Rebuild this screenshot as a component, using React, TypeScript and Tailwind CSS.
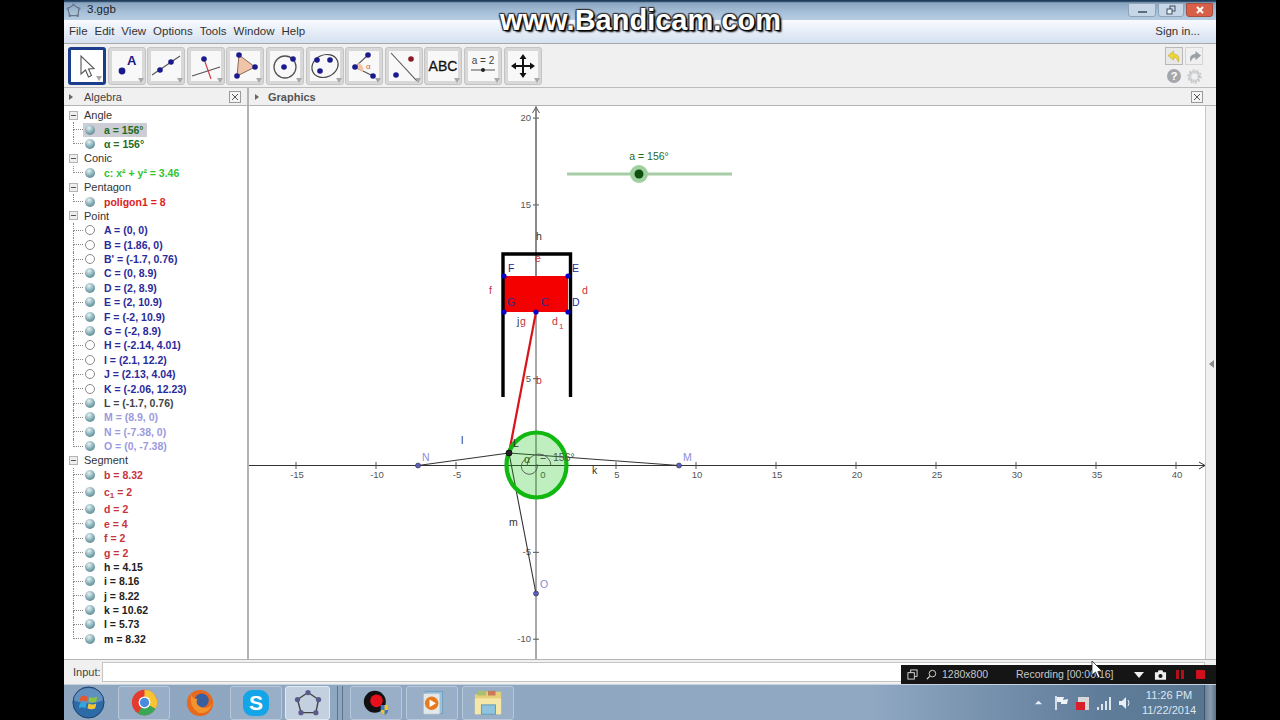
const BLUE = 'text-[#2a2a9a]';
const LILAC = 'text-[#9a9ade]';
const RED = 'text-[#c8323c]';
const INK = 'text-[#222222]';

type Row = { label: React.ReactNode; color: string; hollow?: boolean; selected?: boolean; tall?: boolean };
type Group = { name: string; rows: Row[] };

const groups: Group[] = [
  {
    name: 'Angle',
    rows: [
      { label: 'a = 156°', color: 'text-[#1f6b1f]', selected: true },
      { label: 'α = 156°', color: 'text-[#1f6b1f]' },
    ],
  },
  { name: 'Conic', rows: [{ label: 'c: x² + y² = 3.46', color: 'text-[#2fc42f]' }] },
  { name: 'Pentagon', rows: [{ label: 'poligon1 = 8', color: 'text-[#e01c1c]' }] },
  {
    name: 'Point',
    rows: [
      { label: 'A = (0, 0)', color: BLUE, hollow: true },
      { label: 'B = (1.86, 0)', color: BLUE, hollow: true },
      { label: "B' = (-1.7, 0.76)", color: BLUE, hollow: true },
      { label: 'C = (0, 8.9)', color: BLUE },
      { label: 'D = (2, 8.9)', color: BLUE },
      { label: 'E = (2, 10.9)', color: BLUE },
      { label: 'F = (-2, 10.9)', color: BLUE },
      { label: 'G = (-2, 8.9)', color: BLUE },
      { label: 'H = (-2.14, 4.01)', color: BLUE, hollow: true },
      { label: 'I = (2.1, 12.2)', color: BLUE, hollow: true },
      { label: 'J = (2.13, 4.04)', color: BLUE, hollow: true },
      { label: 'K = (-2.06, 12.23)', color: BLUE, hollow: true },
      { label: 'L = (-1.7, 0.76)', color: 'text-[#444444]' },
      { label: 'M = (8.9, 0)', color: LILAC },
      { label: 'N = (-7.38, 0)', color: LILAC },
      { label: 'O = (0, -7.38)', color: LILAC },
    ],
  },
  {
    name: 'Segment',
    rows: [
      { label: 'b = 8.32', color: RED },
      {
        label: (
          <>
            c<sub className="text-[8px]">1</sub> = 2
          </>
        ),
        color: RED,
        tall: true,
      },
      { label: 'd = 2', color: RED },
      { label: 'e = 4', color: RED },
      { label: 'f = 2', color: RED },
      { label: 'g = 2', color: RED },
      { label: 'h = 4.15', color: INK },
      { label: 'i = 8.16', color: INK },
      { label: 'j = 8.22', color: INK },
      { label: 'k = 10.62', color: INK },
      { label: 'l = 5.73', color: INK },
      { label: 'm = 8.32', color: INK },
    ],
  },
];

function Marble({ hollow }: { hollow?: boolean }) {
  if (hollow) {
    return <div className="w-[10px] h-[10px] rounded-full border border-[#8a8a8a] bg-white shrink-0" />;
  }
  return (
    <div className="w-[10px] h-[10px] rounded-full shrink-0 bg-[radial-gradient(circle_at_40%_30%,#e8f2f4_0%,#8fb4bc_45%,#3f6f7c_100%)]" />
  );
}

function AlgebraRow({ row, last }: { row: Row; last: boolean }) {
  return (
    <div className={`flex items-center ${row.tall ? 'h-[20px]' : 'h-[14.4px]'}`}>
      <div className="w-[10px] self-stretch flex flex-col shrink-0">
        <div className="flex-1 border-l border-b border-dotted border-[#888888]" />
        <div className={`flex-1 ${last ? '' : 'border-l border-dotted border-[#888888]'}`} />
      </div>
      <div className={`flex items-center h-[14px] pl-[2px] pr-[3px] ${row.selected ? 'bg-[#cdcdd6]' : ''}`}>
        <Marble hollow={row.hollow} />
        <div className={`ml-[9px] leading-[14px] text-[10.5px] font-bold whitespace-nowrap ${row.color}`}>{row.label}</div>
      </div>
    </div>
  );
}

function Algebra() {
  return (
    <div className="w-[183px] shrink-0 bg-white pt-[2px] pl-[5px] overflow-hidden">
      {groups.map((g) => (
        <div key={g.name}>
          <div className="flex items-center h-[14.4px]">
            <div className="w-[9px] h-[9px] border border-[#b4b4b4] bg-[#eeeeee] flex items-center justify-center shrink-0">
              <div className="w-[5px] h-px bg-[#555555]" />
            </div>
            <span className="ml-[6px] text-[11px] text-[#333333]">{g.name}</span>
          </div>
          <div className="ml-[4px]">
            {g.rows.map((r, i) => (
              <AlgebraRow key={i} row={r} last={i === g.rows.length - 1} />
            ))}
          </div>
        </div>
      ))}
    </div>
  );
}

function Dot({ x, y, fill = '#1a1a8c', r = 2.8 }: { x: number; y: number; fill?: string; r?: number }) {
  return <circle cx={x} cy={y} r={r} fill={fill} />;
}

const toolIcons: React.ReactNode[] = [
  <path d="M13 9 L13 27 L17.5 23 L20.5 30 L23.5 28.5 L20.5 22 L26 21.5 Z" fill="#fff" stroke="#555" strokeWidth="1.1" />,
  <>
    <Dot x={14} y={24} r={3.4} />
    <text x="19" y="18" fontSize="13" fontWeight="700" fill="#1a1a8c" fontFamily="Liberation Sans">A</text>
  </>,
  <>
    <path d="M5 28 L33 9" stroke="#555" strokeWidth="1.1" />
    <Dot x={13} y={23} />
    <Dot x={24} y={15} />
  </>,
  <>
    <path d="M5 29 L33 20" stroke="#555" strokeWidth="1.1" />
    <path d="M17 12 L24 32" stroke="#c8323c" strokeWidth="1.1" />
    <Dot x={17} y={12} />
  </>,
  <>
    <path d="M13 8 L29 20 L11 29 Z" fill="#efc4a8" stroke="#8a6a58" strokeWidth="1" />
    <Dot x={13} y={8} />
    <Dot x={29} y={20} />
    <Dot x={11} y={29} />
  </>,
  <>
    <circle cx="19" cy="20" r="11" fill="none" stroke="#555" strokeWidth="1.3" />
    <Dot x={18} y={20} />
    <Dot x={27} y={12} />
  </>,
  <>
    <ellipse cx="19" cy="19" rx="13.5" ry="11" transform="rotate(-25 19 19)" fill="none" stroke="#444" strokeWidth="1.2" />
    <Dot x={11} y={13} />
    <Dot x={24} y={13} />
    <Dot x={14} y={24} />
  </>,
  <>
    <path d="M23 8 L10 20 L28 29" fill="none" stroke="#555" strokeWidth="1.1" />
    <path d="M14 16 A8 8 0 0 1 18 25 L10 20 Z" fill="#efc4a8" />
    <text x="21" y="22" fontSize="8" fill="#c8662c" fontFamily="Liberation Sans">α</text>
    <Dot x={23} y={8} />
    <Dot x={10} y={20} />
    <Dot x={28} y={29} />
  </>,
  <>
    <path d="M6 6 L32 34" stroke="#555" strokeWidth="1.1" />
    <Dot x={26} y={12} fill="#8c1a24" />
    <Dot x={11} y={28} />
  </>,
  <text x="19" y="24" textAnchor="middle" fontSize="14" fill="#111" stroke="#111" strokeWidth="0.3" fontFamily="Liberation Sans">ABC</text>,
  <>
    <text x="19" y="17" textAnchor="middle" fontSize="10" fill="#444" fontFamily="Liberation Sans">a = 2</text>
    <path d="M7 23 L31 23" stroke="#555" strokeWidth="1" />
    <circle cx="19" cy="23" r="2" fill="#222" />
  </>,
  <path
    d="M19 7 L22.5 12 L20 12 L20 18 L26 18 L26 15.5 L31 19 L26 22.5 L26 20 L20 20 L20 26 L22.5 26 L19 31 L15.5 26 L18 26 L18 20 L12 20 L12 22.5 L7 19 L12 15.5 L12 18 L18 18 L18 12 L15.5 12 Z"
    fill="#111"
  />,
];

function ToolButton({ index }: { index: number }) {
  const selected = index === 0;
  return (
    <div
      className={`relative w-[38px] h-[38px] rounded-[3px] shrink-0 ${
        selected ? 'border-[3px] border-[#1c3c8c] bg-white' : 'border border-[#c4c4c4] bg-[#d8d8d8] p-[3px]'
      }`}
    >
      <svg viewBox={selected ? '3 3 32 32' : '4 4 30 30'} className={selected ? 'w-[32px] h-[32px]' : 'w-[30px] h-[30px] bg-[#f8f8f8]'}>
        {toolIcons[index]}
      </svg>
      <div className="absolute right-[1px] bottom-[1px] w-0 h-0 border-l-[3px] border-r-[3px] border-t-[5px] border-l-transparent border-r-transparent border-t-[#a8a8a8]" />
    </div>
  );
}

function CloseBox() {
  return (
    <div className="w-[12px] h-[12px] border border-[#9a9a9a] bg-[#f4f4f4] flex items-center justify-center">
      <svg viewBox="0 0 8 8" className="w-[8px] h-[8px]">
        <path d="M1 1 L7 7 M7 1 L1 7" stroke="#555" strokeWidth="1" />
      </svg>
    </div>
  );
}

function SmallPentagon({ className, dot = '#5a5a8c' }: { className: string; dot?: string }) {
  const pts = [
    [16, 4],
    [28, 12],
    [25, 27],
    [8, 27],
    [4, 12],
  ];
  return (
    <svg viewBox="0 0 32 32" className={className}>
      <polygon points={pts.map((p) => p.join(',')).join(' ')} fill="none" stroke="#444" strokeWidth="1.6" />
      {pts.map((p, i) => (
        <circle key={i} cx={p[0]} cy={p[1]} r="3" fill={dot} />
      ))}
    </svg>
  );
}

function Graphics() {
  const xTicks = [-15, -10, -5, 5, 10, 15, 20, 25, 30, 35, 40];
  const yTicks = [20, 15, 5, -5, -10];
  const px = (u: number) => 536 + u * 16;
  const py = (u: number) => 465.5 - u * 17.37;
  const label = { fontFamily: 'Liberation Sans', fontSize: 10.5 };
  return (
    <svg viewBox="249 106 956 553" className="w-[956px] h-[553px] bg-white block">
      <path d="M249 465.5 H1205 M1199 462 L1205 465.5 L1199 469" stroke="#333" strokeWidth="1" fill="none" />
      <path d="M536 659 V107 M532.5 113 L536 107 L539.5 113" stroke="#555" strokeWidth="1" fill="none" />
      {xTicks.map((t) => (
        <g key={t}>
          <path d={`M${px(t)} 462 V469`} stroke="#555" />
          <text x={px(t) + 1} y="478" textAnchor="middle" fill="#555" {...label} fontSize="9.5">{t}</text>
        </g>
      ))}
      {yTicks.map((t) => (
        <g key={t}>
          <path d={`M533 ${py(t)} H539`} stroke="#555" />
          <text x="531" y={py(t) + 3} textAnchor="end" fill="#555" {...label} fontSize="9.5">{t}</text>
        </g>
      ))}
      <text x="543" y="478" textAnchor="middle" fill="#555" {...label} fontSize="9.5">0</text>

      <path d="M567 174 H732" stroke="#a6cda6" strokeWidth="3" />
      <circle cx="639" cy="174" r="9" fill="#9fd09f" />
      <circle cx="639" cy="174" r="4.5" fill="#0f4f0f" />
      <text x="649" y="160" textAnchor="middle" fill="#1f6b1f" {...label}>a = 156°</text>

      <rect x="504" y="276" width="64" height="36" fill="#f50000" />
      <path d="M536 106 V276" stroke="#777" strokeWidth="1.2" />
      <path d="M503 397 V254 H570.5 V397" fill="none" stroke="#000" strokeWidth="3.4" />
      <path d="M536 312 L509 453" stroke="#d8141c" strokeWidth="2.2" />
      <path d="M418 465.5 L509 453 L679 465.5 M509 453 L536 593.5" fill="none" stroke="#333" strokeWidth="1.1" />

      <ellipse cx="536.5" cy="465" rx="30" ry="32.5" fill="#00c000" fillOpacity="0.25" stroke="#10b810" strokeWidth="4.2" />
      <path d="M527 466 A10 10 0 0 1 551 466" fill="none" stroke="#555" strokeWidth="0.9" />
      <path d="M526 459 A8 8 0 1 0 537 464" fill="none" stroke="#555" strokeWidth="0.9" />

      <Dot x={504} y={276} fill="#0000c8" r={2.6} />
      <Dot x={568} y={276} fill="#0000c8" r={2.6} />
      <Dot x={504} y={312} fill="#0000c8" r={2.6} />
      <Dot x={536} y={312} fill="#0000c8" r={2.6} />
      <Dot x={568} y={312} fill="#0000c8" r={2.6} />
      <circle cx="509" cy="453" r="3" fill="#222" stroke="#111" />
      <circle cx="418" cy="465.5" r="2.5" fill="#5c5cc0" stroke="#333" strokeWidth="0.6" />
      <circle cx="679" cy="465.5" r="2.5" fill="#5c5cc0" stroke="#333" strokeWidth="0.6" />
      <circle cx="536" cy="593.5" r="2.5" fill="#5c5cc0" stroke="#333" strokeWidth="0.6" />

      <g {...label}>
        <text x="536" y="240" fill="#333">h</text>
        <text x="535" y="262" fill="#c8323c">e</text>
        <text x="508" y="272" fill="#2a2a9a">F</text>
        <text x="572" y="272" fill="#2a2a9a">E</text>
        <text x="489" y="294" fill="#c8323c">f</text>
        <text x="582" y="294" fill="#c8323c">d</text>
        <text x="507" y="306" fill="#2a2a9a">G</text>
        <text x="541" y="306" fill="#2a2a9a">C</text>
        <text x="572" y="306" fill="#2a2a9a">D</text>
        <text x="517" y="325" fill="#333">j</text>
        <text x="520" y="325" fill="#c8323c">g</text>
        <text x="552" y="325" fill="#c8323c">d</text>
        <text x="559" y="329" fill="#c8323c" fontSize="8">1</text>
        <text x="536" y="384" fill="#c8323c">b</text>
        <text x="461" y="444" fill="#333">l</text>
        <text x="513" y="447" fill="#333">L</text>
        <text x="422" y="461" fill="#8c8cd8">N</text>
        <text x="683" y="461" fill="#8c8cd8">M</text>
        <text x="592" y="474" fill="#333">k</text>
        <text x="509" y="526" fill="#333">m</text>
        <text x="540" y="588" fill="#8c8cd8">O</text>
        <text x="524" y="463" fill="#1f6b1f">α</text>
        <text x="540" y="461" fill="#555">=</text>
        <text x="553" y="461" fill="#555">156°</text>
      </g>
    </svg>
  );
}

function TaskButton({ width, active, children }: { width: string; active?: boolean; children: React.ReactNode }) {
  return (
    <div
      className={`${width} h-[34px] rounded-[3px] flex items-center justify-center shrink-0 ${
        active ? 'bg-[#c3d0df] border border-[#e0e8f0]' : 'bg-[#9db2c9]/70 border border-[#b9c8d8]'
      }`}
    >
      {children}
    </div>
  );
}

function Taskbar() {
  return (
    <div className="h-[36px] flex items-center bg-[linear-gradient(90deg,#8ea6c0_0%,#90a8c2_70%,#5f7c9a_90%,#58758f_100%)] border-t border-[#c8d4e0]">
      <div className="w-[54px] flex justify-center pr-[6px] shrink-0">
        <svg viewBox="0 0 34 34" className="w-[33px] h-[33px]">
          <circle cx="17" cy="17" r="16" fill="#2d6aa8" stroke="#1b3e66" />
          <path d="M2 15 A15 13 0 0 1 32 15 Q17 21 2 15 Z" fill="#fff" fillOpacity="0.25" />
          <path d="M9 11 Q12 9 16 11 L15 16 Q12 14 8 16 Z" fill="#e9542a" />
          <path d="M18 11 Q21 13 26 11 L25 16 Q21 18 17 16 Z" fill="#8cc63f" />
          <path d="M8 18 Q12 16 15 18 L14 23 Q11 21 7 23 Z" fill="#2fa8e0" />
          <path d="M17 18 Q21 20 25 18 L24 23 Q20 25 16 23 Z" fill="#f7c531" />
        </svg>
      </div>
      <div className="flex items-center gap-[4px]">
        <TaskButton width="w-[52px]">
          <svg viewBox="0 0 32 32" className="w-[27px] h-[27px]">
            <circle cx="16" cy="16" r="15" fill="#e33b2e" />
            <path d="M16 16 L29 23.5 A15 15 0 0 1 8 29 Z" fill="#3aa757" />
            <path d="M16 16 L16 1 A15 15 0 0 1 29 23.5 Z" fill="#f7c531" />
            <circle cx="16" cy="16" r="7" fill="#fff" />
            <circle cx="16" cy="16" r="5.5" fill="#4a8be0" />
          </svg>
        </TaskButton>
        <div className="w-[52px] flex justify-center shrink-0">
          <svg viewBox="0 0 32 32" className="w-[28px] h-[28px]">
            <circle cx="16" cy="16" r="15" fill="#e8681e" />
            <circle cx="18" cy="13" r="8" fill="#3a5f9e" />
            <path d="M6 6 Q3 20 14 27 Q26 30 30 16 Q26 24 18 21 Q10 18 13 11 Q8 12 6 6 Z" fill="#f2932c" />
          </svg>
        </div>
        <TaskButton width="w-[52px]">
          <div className="w-[26px] h-[26px] rounded-[9px] bg-[#12a5e8] flex items-center justify-center text-white font-bold text-[21px] leading-none">
            S
          </div>
        </TaskButton>
        <TaskButton width="w-[45px] ml-[-1px]" active>
          <SmallPentagon className="w-[28px] h-[28px]" />
        </TaskButton>
        <div className="w-[6px] h-[34px] border-x border-[#5f7288] mx-[3px] shrink-0" />
        <TaskButton width="w-[52px]">
          <svg viewBox="0 0 32 32" className="w-[27px] h-[27px]">
            <circle cx="14" cy="15" r="13" fill="#111" />
            <circle cx="16" cy="14" r="7.5" fill="#e8101c" />
            <path d="M21 19 L30 19 L30 25 Q30 29 25.5 31 Q21 29 21 25 Z" fill="#3c78c8" />
            <path d="M25.5 19 H30 V25 H25.5 Z M21 25 H25.5 V31 Q21 29 21 25 Z" fill="#f2c431" />
          </svg>
        </TaskButton>
        <TaskButton width="w-[52px]">
          <svg viewBox="0 0 32 32" className="w-[27px] h-[27px]">
            <rect x="8" y="3" width="20" height="26" fill="#8ec4e8" stroke="#6a9cc0" />
            <rect x="5" y="5" width="20" height="25" rx="2" fill="#e2e8ea" stroke="#a8b4bc" />
            <circle cx="15" cy="17" r="8" fill="#e87a1e" />
            <path d="M12.5 12.5 L20 17 L12.5 21.5 Z" fill="#fff" />
          </svg>
        </TaskButton>
        <TaskButton width="w-[52px]">
          <svg viewBox="0 0 32 32" className="w-[30px] h-[30px]">
            <path d="M2 7 H12 L14 4 H30 V28 H2 Z" fill="#e6cf7a" />
            <rect x="5" y="3" width="9" height="5" fill="#a8c070" />
            <rect x="16" y="3" width="8" height="5" fill="#c87a5a" />
            <path d="M2 11 H30 V28 H2 Z" fill="#f4e7a8" />
            <rect x="9" y="18" width="15" height="10" fill="#8ec4e0" stroke="#5f98b8" />
          </svg>
        </TaskButton>
      </div>
      <div className="ml-auto flex items-center text-[#dbe6f0]">
        <svg viewBox="0 0 10 10" className="w-[9px] h-[9px] mr-[11px]">
          <path d="M5 3 L9 7 H1 Z" fill="#e8eef4" />
        </svg>
        <svg viewBox="0 0 16 16" className="w-[16px] h-[16px] mr-[5px]">
          <path d="M2 1 V15" stroke="#f0f4f8" strokeWidth="1.6" />
          <path d="M3 2 H10 L9 5 L14 4 L13 9 H7 L7 7 H3 Z" fill="#f0f4f8" />
        </svg>
        <svg viewBox="0 0 16 16" className="w-[16px] h-[16px] mr-[5px]">
          <rect x="3" y="2" width="11" height="13" fill="#d8d8d8" />
          <path d="M1 7 H10 V15 H1 Z" fill="#d8202c" />
        </svg>
        <svg viewBox="0 0 16 16" className="w-[16px] h-[16px] mr-[5px]">
          <path d="M1 12 H3 V15 H1 Z M5 9 H7 V15 H5 Z M9 6 H11 V15 H9 Z M13 2 H15 V15 H13 Z" fill="#dde4ea" />
        </svg>
        <svg viewBox="0 0 16 16" className="w-[16px] h-[16px] mr-[5px]">
          <path d="M2 6 H5 L9 2 V14 L5 10 H2 Z" fill="#e8eef4" />
          <path d="M11 5 Q13 8 11 11" stroke="#e8eef4" fill="none" />
        </svg>
        <div className="w-[62px] text-center text-[11px] leading-[15px]">
          <div>11:26 PM</div>
          <div>11/22/2014</div>
        </div>
        <div className="w-[12px] h-[35px] ml-[4px] bg-[linear-gradient(90deg,#6b8299,#8a9caf,#5b7288)] border-l border-[#3f566c]" />
      </div>
    </div>
  );
}

export default function App() {
  return (
    <div
      className="relative w-[1280px] h-[720px] bg-black overflow-hidden flex justify-center"
      style={{ fontFamily: '"Liberation Sans", Arial, sans-serif' }}
    >
      <div className="w-[1152px] h-[720px] flex flex-col bg-[#f0f0f0] text-[#333333]">
        {/* title bar */}
        <div className="h-[20px] flex items-center pl-[2px] pr-[3px] bg-[linear-gradient(180deg,#1f3d5c_0%,#1f3d5c_6%,#8aa5c0_14%,#a6bfd8_60%,#b6cce2_100%)]">
          <SmallPentagon className="w-[15px] h-[15px]" dot="#6c7f9c" />
          <span className="ml-[6px] text-[11.5px] text-[#222222]">3.ggb</span>
          <div className="ml-auto flex gap-[2px]">
            <div className="w-[28px] h-[14px] rounded-b-[3px] border border-[#8ea4ba] bg-[#c6d6e6] flex items-end justify-center pb-[3px]">
              <div className="w-[9px] h-[2px] bg-[#f4f8fc] border border-[#5a6e84]" />
            </div>
            <div className="w-[26px] h-[14px] rounded-b-[3px] border border-[#8ea4ba] bg-[#c6d6e6] flex items-center justify-center">
              <svg viewBox="0 0 10 10" className="w-[10px] h-[10px]">
                <rect x="4" y="1" width="5" height="5" fill="none" stroke="#3f4f60" />
                <rect x="1" y="4" width="5" height="5" fill="#e8f0f6" stroke="#3f4f60" />
              </svg>
            </div>
            <div className="w-[27px] h-[14px] rounded-b-[3px] border border-[#a65040] bg-[#d86048] flex items-center justify-center">
              <svg viewBox="0 0 10 10" className="w-[10px] h-[10px]">
                <path d="M2 2 L8 8 M8 2 L2 8" stroke="#fff" strokeWidth="2" />
              </svg>
            </div>
          </div>
        </div>

        {/* menu bar */}
        <div className="h-[24px] flex items-center justify-between pl-[5px] pr-[16px] text-[11.5px] text-[#333333] bg-[linear-gradient(180deg,#f8fafe_0%,#d6e0f0_100%)] border-b border-[#a8a8a8]">
          <div className="flex gap-[7px]">
            {['File', 'Edit', 'View', 'Options', 'Tools', 'Window', 'Help'].map((m) => (
              <span key={m}>{m}</span>
            ))}
          </div>
          <span>Sign in...</span>
        </div>

        {/* toolbar */}
        <div className="h-[44px] flex items-center pl-[4px] pr-[13px] border-b border-[#bcbcbc]">
          <div className="flex gap-[1.6px]">
            {toolIcons.map((_, i) => (
              <ToolButton key={i} index={i} />
            ))}
          </div>
          <div className="ml-auto w-[38px] flex flex-wrap gap-x-[2px] gap-y-[4px] justify-center">
            <div className="w-[18px] h-[18px] border border-[#b8b8b8] bg-[#e8e8e8] flex items-center justify-center">
              <svg viewBox="0 0 16 16" className="w-[15px] h-[15px]">
                <path d="M7 2 L1 7 L7 12 V9 Q11 9 12 14 Q15 6 7 5 Z" fill="#ecd43a" stroke="#b8a020" strokeWidth="0.5" />
              </svg>
            </div>
            <div className="w-[18px] h-[18px] border border-[#d4d4d4] bg-[#f0f0f0] flex items-center justify-center">
              <svg viewBox="0 0 16 16" className="w-[15px] h-[15px]">
                <path d="M9 2 L15 7 L9 12 V9 Q5 9 4 14 Q1 6 9 5 Z" fill="#9aa0a4" />
              </svg>
            </div>
            <div className="w-[18px] flex justify-center">
              <div className="w-[14px] h-[14px] rounded-full bg-[#a4a8ac] text-white text-[11px] font-bold leading-[14px] text-center">?</div>
            </div>
            <div className="w-[18px] flex justify-center">
              <svg viewBox="0 0 16 16" className="w-[15px] h-[15px]">
                <circle cx="8" cy="8" r="5" fill="none" stroke="#c4c8cc" strokeWidth="3" strokeDasharray="2 0.6" />
                <circle cx="8" cy="8" r="7" fill="none" stroke="#c4c8cc" strokeWidth="1.5" strokeDasharray="2 2.4" />
              </svg>
            </div>
          </div>
        </div>

        {/* panel headers */}
        <div className="h-[18px] flex border-b border-[#b4b4b4] text-[11px]">
          <div className="w-[183px] flex items-center pl-[5px] pr-[6px]">
            <div className="w-0 h-0 border-y-[3.5px] border-l-[4px] border-y-transparent border-l-[#666666]" />
            <span className="ml-[11px] pt-[2px] text-[#444444]">Algebra</span>
            <div className="ml-auto">
              <CloseBox />
            </div>
          </div>
          <div className="w-[2px] bg-[#b4b4b4]" />
          <div className="flex-1 flex items-center pl-[6px] pr-[13px]">
            <div className="w-0 h-0 border-y-[3.5px] border-l-[4px] border-y-transparent border-l-[#666666]" />
            <span className="ml-[9px] pt-[2px] font-bold text-[#555555]">Graphics</span>
            <div className="ml-auto">
              <CloseBox />
            </div>
          </div>
        </div>

        {/* work area */}
        <div className="h-[553px] flex">
          <Algebra />
          <div className="w-[2px] bg-[#b4b4b4] shrink-0" />
          <Graphics />
          <div className="flex-1 flex items-center justify-center pb-[37px] border-l border-[#c8c8c8]">
            <div className="w-0 h-0 border-y-[4px] border-r-[5px] border-y-transparent border-r-[#8a8a8a]" />
          </div>
        </div>

        {/* input bar */}
        <div className="h-[25px] flex items-center pl-[9px] pr-[11px] border-t border-[#b4b4b4] text-[11px] text-[#444444]">
          <span className="w-[29px]">Input:</span>
          <div className="flex-1 h-[20px] bg-white border border-[#c4c4c4]" />
        </div>

        <Taskbar />
      </div>

      {/* screen recorder overlays */}
      <div className="absolute left-[500px] top-[3px] text-[29px] leading-[34px] font-bold text-white [text-shadow:1px_1px_1px_#000,-1px_-1px_1px_#333,2px_2px_2px_#000,-1px_1px_1px_#333,1px_-1px_1px_#333]">
        www.Bandicam.com
      </div>
      <div className="absolute left-[901px] top-[665px] w-[315px] h-[19px] bg-[#151515] flex items-center text-[10.5px] text-[#c8c8c8]">
        <svg viewBox="0 0 12 12" className="w-[11px] h-[11px] ml-[6px]">
          <rect x="4" y="1" width="7" height="7" fill="none" stroke="#ddd" />
          <rect x="1" y="4" width="7" height="7" fill="#151515" stroke="#ddd" />
        </svg>
        <svg viewBox="0 0 12 12" className="w-[11px] h-[11px] ml-[8px]">
          <circle cx="7" cy="5" r="3.6" fill="none" stroke="#ddd" />
          <path d="M4 8 L1 11" stroke="#ddd" strokeWidth="1.4" />
        </svg>
        <span className="ml-[5px] w-[74px]">1280x800</span>
        <span>Recording [00:00:16]</span>
        <div className="ml-[21px] w-0 h-0 border-x-[5px] border-t-[6px] border-x-transparent border-t-[#eeeeee]" />
        <svg viewBox="0 0 14 12" className="w-[13px] h-[12px] ml-[10px]">
          <path d="M1 3 H4 L5 1 H9 L10 3 H13 V11 H1 Z" fill="#eee" />
          <circle cx="7" cy="7" r="2.2" fill="#151515" />
        </svg>
        <div className="ml-[9px] flex gap-[2px]">
          <div className="w-[3px] h-[9px] bg-[#b01018]" />
          <div className="w-[3px] h-[9px] bg-[#b01018]" />
        </div>
        <div className="ml-[12px] w-[9px] h-[9px] rounded-[1px] bg-[#d0101c]" />
      </div>
      <svg viewBox="0 0 12 20" className="absolute left-[1091px] top-[660px] w-[12px] h-[20px]">
        <path d="M1 1 V15 L4.5 12 L7 18 L9 17 L6.8 11.5 L11 11 Z" fill="#ffffff" stroke="#222" strokeWidth="0.8" />
      </svg>
    </div>
  );
}
